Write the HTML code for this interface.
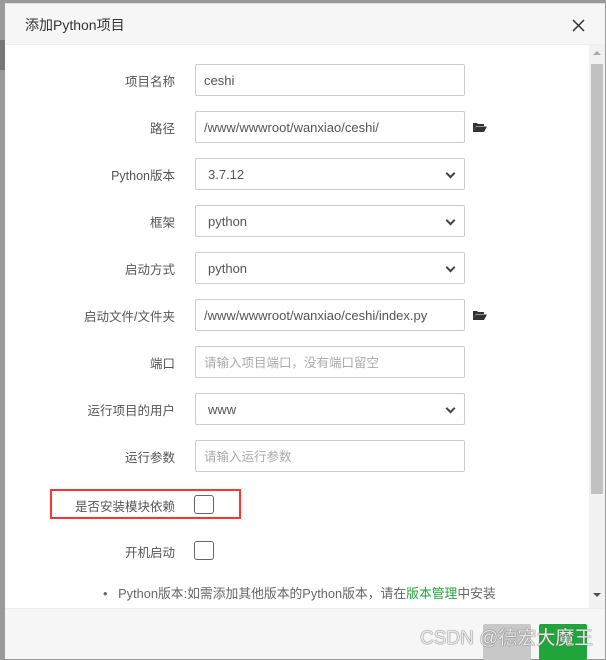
<!DOCTYPE html>
<html><head><meta charset="utf-8"><style>
*{box-sizing:border-box;margin:0;padding:0}
body{width:606px;height:658px;overflow:hidden;background:#999;font-family:"Liberation Sans","Noto Sans CJK SC",sans-serif;font-size:12.5px;line-height:16px;color:#555;position:relative}
.bg{position:absolute;left:0;top:0;width:5px;height:658px;background:#9a9a9a}
.bg .d{position:absolute;left:0;width:5px;height:30px;background:#555}
.modal{position:absolute;left:5px;top:3px;width:600px;height:655px;background:#fff;border-top:1px solid #ddd}
.hd{height:41px;background:#f6f6f6;border-bottom:1px solid #eee;font-size:14px;line-height:18px;color:#333;padding:12px 0 0 20px}
.x{position:absolute;left:567px;top:15px;width:13px;height:13px}
.row{position:absolute;left:0;height:32px;width:590px}
.lbl{position:absolute;right:420px;top:10px;text-align:right;color:#555;white-space:nowrap}
.inp{position:absolute;left:190px;top:0;width:270px;height:32px;border:1px solid #ccc;border-radius:2px;padding:8px 8px;color:#555;white-space:nowrap;overflow:hidden;font-size:13px}
.inp.ph{color:#aaa;font-size:12.5px}
.sel{padding-left:12px}
.sel:after{content:"";position:absolute;right:10px;top:11px;width:5px;height:5px;border-right:2px solid #444;border-bottom:2px solid #444;transform:rotate(45deg)}
.fold{position:absolute;left:468px;top:11px;width:14px;height:10px}
.cb{position:absolute;left:189px;width:20px;height:19px;border:1px solid #666;border-radius:3px;background:#fff}
.red{position:absolute;left:45px;top:485px;width:191px;height:30px;border:2px solid #f33}
.sb{position:absolute;left:584px;top:41px;width:16px;height:566px;background:#f1f1f1}
.th{position:absolute;left:586px;top:60px;width:12px;height:430px;background:#c1c1c1}
.ft{position:absolute;left:0;top:604px;width:600px;height:51px;background:#f6f6f6;border-top:1px solid #eee}
.btn{position:absolute;top:15px;width:48px;height:36px;border-radius:2px}
</style></head><body>
<div class="bg"><div class="d" style="top:40px;background:#777"></div></div>
<div class="modal">
<div class="hd">添加Python项目</div>
<svg class="x" viewBox="0 0 13 13"><path d="M1 1L12 12M12 1L1 12" stroke="#333" stroke-width="1.5"/></svg>
<div class="row" style="top:60px"><div class="lbl">项目名称</div><div class="inp">ceshi</div></div>
<div class="row" style="top:107px"><div class="lbl">路径</div><div class="inp">/www/wwwroot/wanxiao/ceshi/</div><svg class="fold" viewBox="0 0 14 10"><path d="M0 1h4l1 1h6v2H3L0 10z M3 4.5h11L11 10H0z" fill="#333"/></svg></div>
<div class="row" style="top:154px"><div class="lbl">Python版本</div><div class="inp sel">3.7.12</div></div>
<div class="row" style="top:201px"><div class="lbl">框架</div><div class="inp sel">python</div></div>
<div class="row" style="top:248px"><div class="lbl">启动方式</div><div class="inp sel">python</div></div>
<div class="row" style="top:295px"><div class="lbl">启动文件/文件夹</div><div class="inp">/www/wwwroot/wanxiao/ceshi/index.py</div><svg class="fold" viewBox="0 0 14 10"><path d="M0 1h4l1 1h6v2H3L0 10z M3 4.5h11L11 10H0z" fill="#333"/></svg></div>
<div class="row" style="top:342px"><div class="lbl">端口</div><div class="inp ph">请输入项目端口，没有端口留空</div></div>
<div class="row" style="top:389px"><div class="lbl">运行项目的用户</div><div class="inp sel">www</div></div>
<div class="row" style="top:436px"><div class="lbl">运行参数</div><div class="inp ph">请输入运行参数</div></div>
<div class="row" style="top:485px"><div class="lbl" style="top:10px">是否安装模块依赖</div></div>
<div class="cb" style="top:491px"></div>
<div class="red"></div>
<div class="row" style="top:531px"><div class="lbl" style="top:10px">开机启动</div></div>
<div class="cb" style="top:537px"></div>
<div style="position:absolute;left:98px;top:582px;color:#666;white-space:nowrap;font-size:12.8px">•&nbsp;&nbsp; Python版本:如需添加其他版本的Python版本，请在<span style="color:#20a53a">版本管理</span>中安装</div>
<div class="sb"><div style="position:absolute;left:4px;top:6px;border:4px solid transparent;border-bottom-color:#aaa;border-top:0"></div><div style="position:absolute;left:4px;top:548px;border:4px solid transparent;border-top-color:#505050;border-bottom:0"></div></div>
<div class="th"></div>
<div class="ft">
<div class="btn" style="left:478px;background:#c8c8c8"></div>
<div class="btn" style="left:534px;background:#20a53a"></div>
<div style="position:absolute;left:415px;top:19px;font-size:19px;line-height:22px;color:#e8e8e8;white-space:nowrap;text-shadow:0 0 1px #666,0 0 1px #666">CSDN @德宏大魔王</div>
</div>
</div>
</body></html>
